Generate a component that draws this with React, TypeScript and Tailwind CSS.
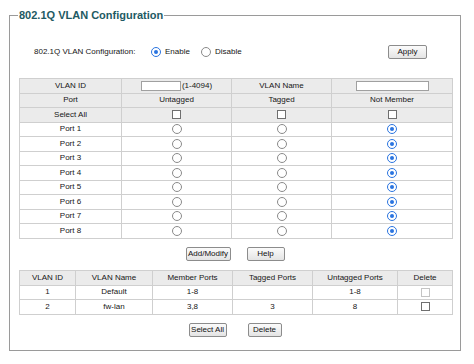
import React from 'react';

// ─── Small form glyphs ───────────────────────────────────────────────

function Radio({ checked = false }: { checked?: boolean }) {
    return checked ? (
        <span className="inline-flex items-center justify-center w-[10px] h-[10px] rounded-full border-[1.5px] border-[#2a74e0] bg-white align-middle">
            <span className="w-[4px] h-[4px] rounded-full bg-[#2a74e0]" />
        </span>
    ) : (
        <span className="inline-block w-[10px] h-[10px] rounded-full border border-[#8a8a8a] bg-white align-middle" />
    );
}

function Check({ faint = false }: { faint?: boolean }) {
    return (
        <span
            className={`inline-block w-[9px] h-[9px] border bg-white align-middle ${faint ? 'border-[#c4c4c4]' : 'border-[#6f6f6f]'}`}
        />
    );
}

function Btn({ label, w }: { label: string; w: string }) {
    return (
        <button
            className={`${w} h-[14px] flex items-center justify-center rounded-[2px] border border-[#8c8c8c] bg-gradient-to-b from-[#fbfbfb] to-[#e4e4e4] text-[8px] text-[#111] leading-none`}
        >
            {label}
        </button>
    );
}

const cell = 'border border-[#cfcfcf] text-center p-0';

export default function App() {
    const ports = [1, 2, 3, 4, 5, 6, 7, 8];
    const vlans = [
        { id: '1', name: 'Default', member: '1-8', tagged: '', untagged: '1-8', faint: true },
        { id: '2', name: 'fw-lan', member: '3,8', tagged: '3', untagged: '8', faint: false },
    ];

    return (
        <div className="w-[474px] h-[364px] bg-white font-['Liberation_Sans',Arial,sans-serif] text-[#161616] pt-[8px] pl-[9px]">
            <fieldset className="w-[452px] h-[343px] border border-[#9a9a9a]">
                <legend className="ml-[8px] px-[1px] text-[11px] leading-[14px] font-bold text-[#1e5a63]">
                    802.1Q VLAN Configuration
                </legend>

                {/* Enable row */}
                <div className="mt-[23px] h-[14px] flex items-center text-[8px] pl-[24px] pr-[33px]">
                    <span className="w-[117px]">802.1Q VLAN Configuration:</span>
                    <Radio checked />
                    <span className="ml-[4px]">Enable</span>
                    <span className="ml-[11px]"><Radio /></span>
                    <span className="ml-[4px]">Disable</span>
                    <span className="ml-auto"><Btn label="Apply" w="w-[39px]" /></span>
                </div>

                {/* Port table */}
                <table className="mt-[19px] ml-[9px] w-[433px] border-collapse text-[8px] table-fixed">
                    <colgroup>
                        <col className="w-[102px]" />
                        <col className="w-[110px]" />
                        <col className="w-[100px]" />
                        <col className="w-[121px]" />
                    </colgroup>
                    <tbody>
                        <tr className="h-[14.5px] bg-[#ebebeb]">
                            <td className={cell}>VLAN ID</td>
                            <td className={cell}>
                                <div className="flex items-center justify-center">
                                    <span className="inline-block w-[40px] h-[10px] border border-[#a0a0a0] bg-white" />
                                    <span className="ml-[1px]">(1-4094)</span>
                                </div>
                            </td>
                            <td className={cell}>VLAN Name</td>
                            <td className={cell}>
                                <div className="flex items-center justify-center">
                                    <span className="inline-block w-[73px] h-[10px] border border-[#a0a0a0] bg-white" />
                                </div>
                            </td>
                        </tr>
                        <tr className="h-[14.5px] bg-[#ebebeb]">
                            <td className={cell}>Port</td>
                            <td className={cell}>Untagged</td>
                            <td className={cell}>Tagged</td>
                            <td className={cell}>Not Member</td>
                        </tr>
                        <tr className="h-[14.5px] bg-[#ebebeb]">
                            <td className={cell}>Select All</td>
                            <td className={cell}><Check /></td>
                            <td className={cell}><Check /></td>
                            <td className={cell}><Check /></td>
                        </tr>
                        {ports.map(p => (
                            <tr key={p} className="h-[14.5px] bg-white">
                                <td className={cell}>Port {p}</td>
                                <td className={cell}><Radio /></td>
                                <td className={cell}><Radio /></td>
                                <td className={cell}><Radio checked /></td>
                            </tr>
                        ))}
                    </tbody>
                </table>

                <div className="mt-[8px] flex justify-center gap-[16px]">
                    <Btn label="Add/Modify" w="w-[45px]" />
                    <Btn label="Help" w="w-[38px]" />
                </div>

                {/* VLAN list */}
                <table className="mt-[9px] ml-[9px] w-[433px] border-collapse text-[8px] table-fixed">
                    <colgroup>
                        <col className="w-[56px]" />
                        <col className="w-[77px]" />
                        <col className="w-[80px]" />
                        <col className="w-[80px]" />
                        <col className="w-[85px]" />
                        <col className="w-[55px]" />
                    </colgroup>
                    <tbody>
                        <tr className="h-[15px] bg-[#ebebeb]">
                            <td className={cell}>VLAN ID</td>
                            <td className={cell}>VLAN Name</td>
                            <td className={cell}>Member Ports</td>
                            <td className={cell}>Tagged Ports</td>
                            <td className={cell}>Untagged Ports</td>
                            <td className={cell}>Delete</td>
                        </tr>
                        {vlans.map(v => (
                            <tr key={v.id} className="h-[14.5px] bg-white">
                                <td className={cell}>{v.id}</td>
                                <td className={cell}>{v.name}</td>
                                <td className={cell}>{v.member}</td>
                                <td className={cell}>{v.tagged}</td>
                                <td className={cell}>{v.untagged}</td>
                                <td className={cell}><Check faint={v.faint} /></td>
                            </tr>
                        ))}
                    </tbody>
                </table>

                <div className="mt-[8px] flex justify-center gap-[21px]">
                    <Btn label="Select All" w="w-[38px]" />
                    <Btn label="Delete" w="w-[34px]" />
                </div>
            </fieldset>
        </div>
    );
}
